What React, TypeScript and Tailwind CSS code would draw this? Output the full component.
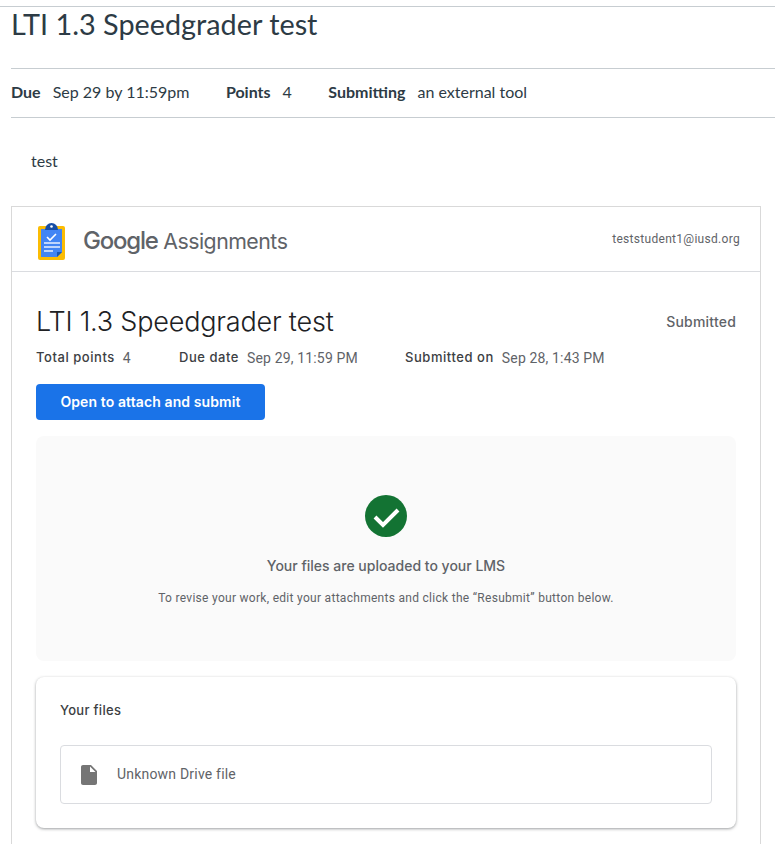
const lato = "font-['Lato','Liberation_Sans',sans-serif]";
const gsans = "font-['Inter','Roboto',sans-serif]";
const roboto = "font-['Roboto','Liberation_Sans',sans-serif]";

function ClipboardLogo() {
  return (
    <svg width="30" height="38" viewBox="0 0 30 38" aria-hidden="true">
      <rect x="1" y="4" width="27" height="34" rx="2" fill="#fbbc04" />
      <path d="M4 7h21v23l-5 5H4z" fill="#4285f4" />
      <path d="M20 35l5-5h-5z" fill="#1a56b0" />
      <path d="M8 8a6.500 7 0 0 1 13 0z" fill="#174ea6" />
      <circle cx="14.500" cy="4.500" r="1.300" fill="#fff" />
      <path d="M10 15l3 3 6-6" fill="none" stroke="#fff" strokeWidth="1.600" />
      <path d="M7 21h16M7 25h16M7 29h9" fill="none" stroke="#e8f0fe" strokeWidth="1.500" />
    </svg>
  );
}

function MetaPair({ label, value }: { label: string; value: string }) {
  return (
    <span className="flex gap-3">
      <span className="font-bold">{label}</span>
      <span>{value}</span>
    </span>
  );
}

function GooglePair({ label, value, width }: { label: string; value: string; width: string }) {
  return (
    <span className={`flex items-center gap-2 ${width}`}>
      <span className={`${gsans} text-[13px] font-medium tracking-[0.55px] text-[#3c4043]`}>{label}</span>
      <span className="text-sm tracking-[0.15px] text-[#5f6368]">{value}</span>
    </span>
  );
}

export default function App() {
  return (
    <div className={`${lato} h-[844px] overflow-hidden bg-white pt-[6px] text-[#2d3b45]`}>
      <div className="border-t border-[#c7cdd1]" />
      <h1 className="h-[61px] pl-[11px] text-[28.8px] leading-[34px] font-normal">LTI 1.3 Speedgrader test</h1>

      <div className="ml-[11px] flex h-[50px] items-center gap-[36.5px] border-y border-[#c7cdd1] pb-[2px] text-[16px]">
        <MetaPair label="Due" value="Sep 29 by 11:59pm" />
        <MetaPair label="Points" value="4" />
        <MetaPair label="Submitting" value="an external tool" />
      </div>

      <p className="pt-[33px] pb-[35px] pl-[31px] text-[16px] leading-[20px]">test</p>

      <div className={`${roboto} mr-[14px] ml-[11px] h-[640px] border border-b-0 border-[#d9d9d9]`}>
        <header className="flex h-[65px] items-center justify-between border-b border-[#dadce0] pr-5 pl-[25px]">
          <div className="flex items-center gap-[16px] pt-[3px]">
            <ClipboardLogo />
            <span className={`${gsans} text-[21.3px] leading-7 tracking-[-0.5px] text-[#5f6368]`}>
              <span className="text-[24px] font-medium tracking-[-1.2px]">Google</span> Assignments
            </span>
          </div>
          <span className="text-xs tracking-[0.3px] text-[#5f6368]">teststudent1@iusd.org</span>
        </header>

        <div className="px-6 pt-8">
          <div className="flex items-center justify-between">
            <h2 className={`${gsans} text-[27px] leading-9 font-light tracking-[-0.2px] text-[#202124]`}>LTI 1.3 Speedgrader test</h2>
            <span className={`${gsans} text-sm font-medium tracking-[0.2px] text-[#5f6368]`}>Submitted</span>
          </div>

          <div className="mt-[9px] flex h-[18px] items-center">
            <GooglePair label="Total points" value="4" width="w-[143px]" />
            <GooglePair label="Due date" value="Sep 29, 11:59 PM" width="w-[226px]" />
            <GooglePair label="Submitted on" value="Sep 28, 1:43 PM" width="" />
          </div>

          <button className={`${gsans} mt-[17px] block h-9 w-[229px] rounded bg-[#1a73e8] text-sm font-semibold tracking-[0.1px] text-white`}>
            Open to attach and submit
          </button>

          <section className="mt-4 flex h-[225px] flex-col items-center rounded-lg bg-[#fafafa] pt-[59px]">
            <svg width="42" height="42" viewBox="0 0 42 42" aria-hidden="true">
              <circle cx="21" cy="21" r="21" fill="#137333" />
              <path d="M10 22l8 8 15-15" fill="none" stroke="#fff" strokeWidth="4" />
            </svg>
            <p className={`${gsans} mt-[19px] text-sm leading-5 font-medium text-[#5f6368]`}>
              Your files are uploaded to your LMS
            </p>
            <p className="mt-3 text-xs leading-5 tracking-[0.29px] text-[#5f6368]">
              To revise your work, edit your attachments and click the “Resubmit” button below.
            </p>
          </section>

          <section className="mt-4 h-[151px] rounded-lg bg-white px-6 pt-6 shadow-[0_1px_3px_rgba(60,64,67,0.5)]">
            <h3 className={`${gsans} text-[13px] leading-[18px] font-medium tracking-[0.3px] text-[#3c4043]`}>Your files</h3>
            <div className="mt-[26px] flex h-[59px] items-center gap-4 rounded border border-[#dadce0] pl-4">
              <svg width="24" height="24" viewBox="0 0 24 24" aria-hidden="true">
                <path d="M6 2c-1.100 0-2 .9-2 2v16c0 1.100.9 2 2 2h12c1.100 0 2-.9 2-2V8l-6-6H6zm7 7V3.500L18.500 9H13z" fill="#757575" />
              </svg>
              <span className="pb-px text-sm tracking-[0.2px] text-[#5f6368]">Unknown Drive file</span>
            </div>
          </section>
        </div>
      </div>
    </div>
  );
}
